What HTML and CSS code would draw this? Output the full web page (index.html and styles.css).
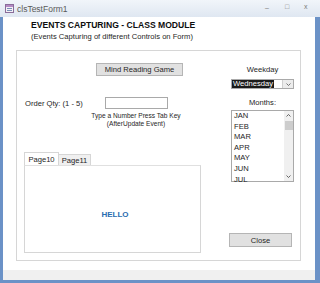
FILE: index.html
```html
<!doctype html>
<html lang="en">
<head>
<meta charset="UTF-8">
<title>clsTestForm1</title>
<link rel="stylesheet" href="styles.css">
</head>
<body>
<div class="window">
	<div class="titlebar">
		<svg class="app-icon" width="9" height="9" viewBox="0 0 9 9">
			<rect x="0.5" y="0.5" width="8" height="8" fill="#f4f0f6" stroke="#8a6d9a"/>
			<rect x="1" y="1" width="7" height="2" fill="#b48ac4"/>
			<rect x="2" y="4" width="5" height="1" fill="#7a90b8"/>
			<rect x="2" y="6" width="5" height="1" fill="#7a90b8"/>
		</svg>
		<span class="title">clsTestForm1</span>
		<span class="ctl ctl-min">&#8211;</span>
		<span class="ctl ctl-max">&#9633;</span>
		<span class="ctl ctl-close">x</span>
	</div>
	<div class="client">
		<div class="header">
			<h1>EVENTS CAPTURING - CLASS MODULE</h1>
			<p>(Events Capturing of different Controls on Form)</p>
		</div>
		<div class="frame">
			<div class="col-left">
				<button class="btn btn-game">Mind Reading Game</button>
				<div class="qty-row">
					<span class="qty-label">Order Qty: (1 - 5)</span>
					<span class="textbox"></span>
				</div>
				<p class="hint">Type a Number Press Tab Key<br>(AfterUpdate Event)</p>
				<div class="tabs">
					<div class="tab-strip">
						<span class="tab tab-active">Page10</span>
						<span class="tab">Page11</span>
					</div>
					<div class="tab-panel">
						<span class="hello">HELLO</span>
					</div>
				</div>
			</div>
			<div class="col-right">
				<div class="lbl">Weekday</div>
				<div class="combo">
					<span class="combo-value"><span class="sel">Wednesday</span></span>
					<span class="combo-btn">
						<svg width="5" height="3" viewBox="0 0 5 3"><path d="M0.5 0.5 L2.5 2.5 L4.5 0.5" fill="none" stroke="#555" stroke-width="0.8"/></svg>
					</span>
				</div>
				<div class="lbl lbl-months">Months:</div>
				<div class="listbox">
					<ul class="items">
						<li>JAN</li>
						<li>FEB</li>
						<li>MAR</li>
						<li>APR</li>
						<li>MAY</li>
						<li>JUN</li>
						<li>JUL</li>
					</ul>
					<div class="scrollbar">
						<svg class="arrow" width="5" height="3" viewBox="0 0 5 3"><path d="M0.5 2.5 L2.5 0.5 L4.5 2.5" fill="none" stroke="#444" stroke-width="0.8"/></svg>
						<div class="thumb"></div>
						<div class="track"></div>
						<svg class="arrow" width="5" height="3" viewBox="0 0 5 3"><path d="M0.5 0.5 L2.5 2.5 L4.5 0.5" fill="none" stroke="#444" stroke-width="0.8"/></svg>
					</div>
				</div>
				<button class="btn btn-close">Close</button>
			</div>
		</div>
		<div class="footer"></div>
	</div>
</div>
</body>
</html>
```

FILE: styles.css
```css
body,
h1,
p,
ul,
li {
	margin: 0;
	padding: 0;
}

ul,
li {
	list-style: none;
}

body {
	font-family: "Liberation Sans", Arial, sans-serif;
	color: #1e1e1e;
	background: #ffffff;
}

.window {
	width: 320px;
	height: 283px;
	box-sizing: border-box;
	background: #6b92c7;
	padding: 0 5px 3px 3px;
	display: flex;
	flex-direction: column;
}

/* title bar */
.titlebar {
	height: 17px;
	margin: 0 -5px 0 -3px;
	background: linear-gradient(#f1f5fa, #dfe7f1);
	display: flex;
	align-items: center;
	position: relative;
}

.app-icon {
	margin-left: 5px;
}

.title {
	margin-left: 3px;
	font-size: 8.5px;
	color: #5a5a5a;
}

.ctl {
	position: absolute;
	top: 4px;
	font-size: 7px;
	color: #7a7a7a;
}

.ctl-min {
	left: 265px;
}

.ctl-max {
	left: 285px;
	top: 3px;
}

.ctl-close {
	left: 304px;
	top: 3px;
}

/* client area */
.client {
	flex: 1;
	background: #ffffff;
	display: flex;
	flex-direction: column;
}

.header {
	padding: 3px 0 0 28px;
	height: 30px;
}

.header h1 {
	font-size: 8.6px;
	line-height: 11px;
	font-weight: bold;
	color: #0d0d0d;
}

.header p {
	font-size: 7.6px;
	line-height: 10px;
	margin-top: 1px;
	color: #262626;
}

.frame {
	margin-left: 13px;
	width: 285px;
	height: 211px;
	box-sizing: border-box;
	border: 1px solid #d6d6d6;
	display: flex;
}

.col-left {
	width: 177px;
	margin-left: 7px;
	display: flex;
	flex-direction: column;
}

.btn {
	font-family: "Liberation Sans", Arial, sans-serif;
	font-size: 7.6px;
	color: #262626;
	background: #e1e1e1;
	border: 1px solid #b5b5b5;
	padding: 0;
	box-sizing: border-box;
}

.btn-game {
	width: 87px;
	height: 13px;
	margin: 12px 0 0 72px;
}

.qty-row {
	margin-top: 21px;
	height: 12px;
	display: flex;
	align-items: center;
}

.qty-label {
	font-size: 7.6px;
	color: #262626;
	margin-left: 1px;
	width: 80px;
}

.textbox {
	width: 63px;
	height: 12px;
	box-sizing: border-box;
	border: 1px solid #a9a9a9;
	background: #ffffff;
}

.hint {
	margin: 3px 0 0 50px;
	width: 124px;
	text-align: center;
	font-size: 6.6px;
	line-height: 8px;
	color: #262626;
}

.tabs {
	margin-top: 24px;
}

.tab-strip {
	height: 13px;
	display: flex;
	align-items: flex-end;
}

.tab {
	font-size: 7.6px;
	box-sizing: border-box;
	border: 1px solid #d6d6d6;
	border-bottom: none;
	display: flex;
	align-items: center;
	justify-content: center;
}

.tab-active {
	width: 35px;
	height: 13px;
	background: #ffffff;
}

.tab:not(.tab-active) {
	width: 32px;
	height: 11px;
	background: #f0f0f0;
	border-left: none;
}

.tab-panel {
	width: 177px;
	height: 88px;
	box-sizing: border-box;
	border: 1px solid #d6d6d6;
	border-top-color: #e0e0e0;
	display: flex;
	justify-content: center;
	padding-top: 44px;
}

.hello {
	font-size: 8px;
	line-height: 10px;
	font-weight: bold;
	color: #2a6db0;
	margin-left: 5px;
}

/* right column */
.col-right {
	width: 65px;
	margin-left: 28px;
	padding-top: 14px;
	display: flex;
	flex-direction: column;
}

.lbl {
	font-size: 7.6px;
	line-height: 10px;
	text-align: center;
	margin-left: 2px;
}

.combo {
	margin: 4px 0 0 2px;
	width: 63px;
	height: 10px;
	box-sizing: border-box;
	border: 1px solid #a9a9a9;
	display: flex;
}

.combo-value {
	flex: 1;
	display: flex;
}

.sel {
	background: #1a1a1a;
	color: #ffffff;
	font-size: 7.6px;
	line-height: 8px;
	padding: 0 1px;
	width: 40px;
	overflow: hidden;
}

.combo-btn {
	width: 10px;
	background: #ececec;
	border-left: 1px solid #cfcfcf;
	display: flex;
	align-items: center;
	justify-content: center;
}

.lbl-months {
	margin-top: 9px;
}

.listbox {
	margin: 2px 0 0 2px;
	width: 63px;
	height: 72px;
	box-sizing: border-box;
	border: 1px solid #a9a9a9;
	display: flex;
}

.items {
	flex: 1;
	padding-left: 2px;
}

.items li {
	font-size: 7.6px;
	line-height: 10.6px;
	height: 10.6px;
}

.scrollbar {
	width: 9px;
	background: #f0f0f0;
	display: flex;
	flex-direction: column;
	align-items: center;
}

.scrollbar .arrow {
	margin: 3px 0;
}

.thumb {
	width: 8px;
	height: 9px;
	background: #cdcdcd;
	margin-top: 1px;
}

.track {
	flex: 1;
}

.btn-close {
	width: 63px;
	height: 14px;
	margin-top: 51px;
}

.footer {
	margin-top: auto;
	height: 10px;
	background: #f0f0f0;
}
```
